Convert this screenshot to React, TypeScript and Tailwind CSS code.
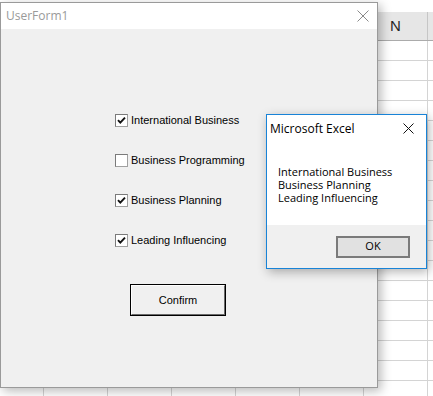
import React from 'react';

const cols = [44, 64, 64, 64, 64, 64, 64, 64];

function Sheet() {
  return (
    <div className="h-[396px] w-[433px] bg-white">
      <div className="h-[12px]" />
      {/* column header */}
      <div className="flex h-[29px] border-b border-[#ababab] bg-[#e6e6e6]">
        {cols.map((w, i) => (
          <div
            key={i}
            style={{ width: w }}
            className="flex shrink-0 items-center justify-center border-r border-[#c6c6c6] text-[15px] text-[#262626] [font-family:'Liberation_Sans',sans-serif]"
          >
            {i === 6 ? 'N' : ''}
          </div>
        ))}
      </div>
      {Array.from({ length: 18 }).map((_, r) => (
        <div key={r} className="flex h-[20px] border-b border-[#d4d4d4]">
          {cols.map((w, i) => (
            <div key={i} style={{ width: w }} className="shrink-0 border-r border-[#d4d4d4]" />
          ))}
        </div>
      ))}
    </div>
  );
}

function Check({ checked, label }: { checked: boolean; label: string }) {
  return (
    <div className="flex h-[13px] items-center gap-[3px]">
      <div className="flex h-[13px] w-[13px] items-center justify-center border border-t-[#7a7a7a] border-l-[#7a7a7a] border-r-[#a0a0a0] border-b-[#a0a0a0] bg-white">
        {checked && (
          <svg width="9" height="9" viewBox="0 0 9 9">
            <path d="M1 4.2 L3.3 6.6 L8 1.6" fill="none" stroke="#111" strokeWidth="1.9" />
          </svg>
        )}
      </div>
      <span className="text-[11px] text-black [font-family:'Liberation_Sans',sans-serif]">{label}</span>
    </div>
  );
}

function UserForm() {
  return (
    <div className="absolute left-0 top-[2px] flex h-[386px] w-[378px] flex-col border border-[#9a9a9a] bg-[#f0f0f0] shadow-[3px_3px_10px_rgba(0,0,0,0.28)]">
      <div className="flex h-[26px] items-center justify-between bg-white pl-[5px] pr-[8px]">
        <span className="text-[12px] text-[#9a9a9a] [font-family:'Open_Sans',sans-serif]">UserForm1</span>
        <svg width="12" height="12" viewBox="0 0 12 12">
          <path d="M0.5 0.5 L11.5 11.5 M11.5 0.5 L0.5 11.5" stroke="#8a8a8a" strokeWidth="1" />
        </svg>
      </div>
      <div className="flex flex-col pl-[114px] pt-[85px]">
        <div className="flex flex-col gap-[27px]">
          <Check checked label="International Business" />
          <Check checked={false} label="Business Programming" />
          <Check checked label="Business Planning" />
          <Check checked label="Leading Influencing" />
        </div>
        <div className="ml-[15px] mt-[37px] h-[32px] w-[96px] border border-black">
          <div className="flex h-full w-full items-center justify-center border border-t-white border-l-white border-r-[#6a6a6a] border-b-[#6a6a6a] bg-[#f0f0f0] text-[11px] text-black [font-family:'Liberation_Sans',sans-serif]">
            Confirm
          </div>
        </div>
      </div>
    </div>
  );
}

function MsgBox() {
  return (
    <div className="absolute left-[266px] top-[114px] flex h-[155px] w-[161px] flex-col border border-[#1883d7] bg-white shadow-[2px_3px_10px_rgba(0,0,0,0.3)] [font-family:'Open_Sans',sans-serif]">
      <div className="flex h-[27px] items-center justify-between pl-[3px] pr-[12px]">
        <span className="text-[12px] text-black">Microsoft Excel</span>
        <svg width="11" height="11" viewBox="0 0 11 11">
          <path d="M0.5 0.5 L10.5 10.5 M10.5 0.5 L0.5 10.5" stroke="#111" strokeWidth="1" />
        </svg>
      </div>
      <div className="flex flex-1 flex-col pl-[11px] pt-[23px] text-[11px] leading-[13px] text-black">
        <span>International Business</span>
        <span>Business Planning</span>
        <span>Leading Influencing</span>
      </div>
      <div className="flex h-[43px] items-center justify-end bg-[#f0f0f0] pr-[16px]">
        <div className="flex h-[22px] w-[74px] items-center justify-center border-2 border-[#7a7a7a] bg-[#e1e1e1] text-[11px] text-black">
          OK
        </div>
      </div>
    </div>
  );
}

export default function App() {
  return (
    <div className="relative h-[396px] w-[433px] overflow-hidden">
      <Sheet />
      <UserForm />
      <MsgBox />
    </div>
  );
}
